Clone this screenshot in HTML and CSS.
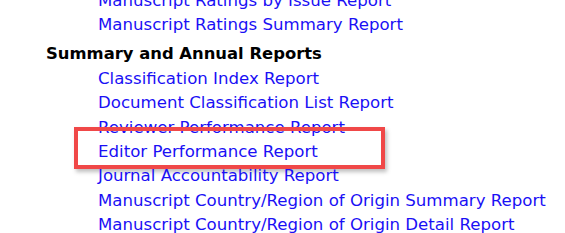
FILE: index.html
```html
<!DOCTYPE html>
<html lang="en">
<head>
<meta charset="UTF-8">
<title>Reports</title>
<link rel="stylesheet" href="styles.css">
</head>
<body>
    <div class="reports">
        <ul class="report-list">
            <li><a href="#">Manuscript Ratings by Issue Report</a></li>
            <li><a href="#">Manuscript Ratings Summary Report</a></li>
        </ul>
        <h3 class="group-title">Summary and Annual Reports</h3>
        <ul class="report-list">
            <li><a href="#">Classification Index Report</a></li>
            <li><a href="#">Document Classification List Report</a></li>
            <li><a href="#">Reviewer Performance Report</a></li>
            <li class="marked"><a href="#">Editor Performance Report</a></li>
            <li><a href="#">Journal Accountability Report</a></li>
            <li><a href="#">Manuscript Country/Region of Origin Summary Report</a></li>
            <li><a href="#">Manuscript Country/Region of Origin Detail Report</a></li>
        </ul>
    </div>
</body>
</html>
```

FILE: styles.css
```css
body {
    margin: 0;
    padding: 0;
    background: #ffffff;
    font-family: "DejaVu Sans", Verdana, sans-serif;
    font-size: 16.6px;
    overflow: hidden;
}
.reports {
    margin-top: -11px;
    padding-left: 46px;
}
.report-list {
    list-style: none;
    margin: 0;
    padding: 0 0 0 52px;
}
.report-list li {
    line-height: 24.4px;
    position: relative;
}
.report-list a {
    color: #1a10f5;
    text-decoration: none;
}
.group-title {
    margin: 3px 0 0 0;
    font-size: 16.4px;
    line-height: 26px;
    color: #000000;
}
/* caixa vermelha de destaque */
.marked::after {
    content: "";
    position: absolute;
    left: -24px;
    top: -13px;
    width: 303px;
    height: 34px;
    border: 4px solid #f04848;
    box-shadow: 2px 3px 4px rgba(0, 0, 0, 0.25);
    pointer-events: none;
}
```
